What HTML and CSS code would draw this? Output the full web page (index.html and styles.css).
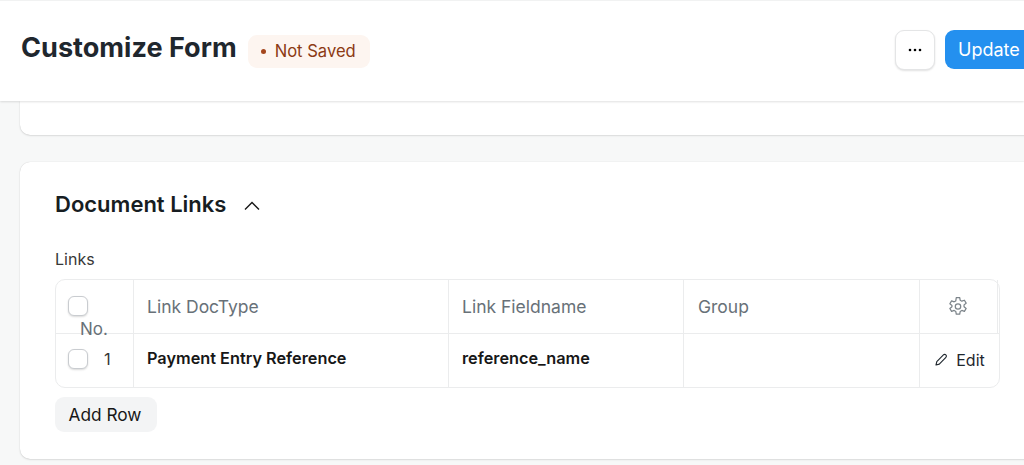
FILE: index.html
```html
<!DOCTYPE html>
<html lang="en">
<head>
<meta charset="utf-8">
<title>Customize Form</title>
<link rel="stylesheet" href="styles.css">
</head>
<body>
<header class="page-head">
  <div class="title-area">
    <h1 class="title">Customize Form</h1>
    <span class="badge"><i class="dot"></i>Not Saved</span>
  </div>
  <div class="actions">
    <button class="btn-more" aria-label="More">
      <svg width="14" height="4" viewBox="0 0 14 4"><circle cx="2" cy="2" r="1.3"/><circle cx="7" cy="2" r="1.3"/><circle cx="12" cy="2" r="1.3"/></svg>
    </button>
    <button class="btn-primary">Update</button>
  </div>
</header>
<main class="content">
  <section class="card card-stub"></section>
  <section class="card card-links">
    <div class="section-head">
      <h2 class="section-title">Document Links</h2>
      <svg class="chevron" width="16" height="10" viewBox="0 0 16 10"><path d="M1 8.5 8 1.5 15 8.5"/></svg>
    </div>
    <div class="field-label">Links</div>
    <div class="grid">
      <div class="row row-head">
        <div class="cell col-no">
          <span class="check"></span>
          <span class="no-label">No.</span>
        </div>
        <div class="cell col-a">Link DocType</div>
        <div class="cell col-b">Link Fieldname</div>
        <div class="cell col-c">Group</div>
        <div class="cell col-act">
          <svg class="gear" viewBox="2 1 14 15.4"><path d="M7.6 1.5h2.8l.4 2.2 1.3.7 2.1-.8 1.4 2.4-1.7 1.4v1.5l1.7 1.4-1.4 2.4-2.1-.8-1.3.8-.4 2.2H7.6l-.4-2.2-1.3-.8-2.1.8-1.4-2.4 1.7-1.4V7.9L2.4 6.5l1.4-2.4 2.1.8 1.3-.7z"/><circle cx="9" cy="8.7" r="2.2"/></svg>
        </div>
      </div>
      <div class="row row-body">
        <div class="cell col-no">
          <span class="check"></span>
          <span class="row-num">1</span>
        </div>
        <div class="cell col-a strong">Payment Entry Reference</div>
        <div class="cell col-b strong">reference_name</div>
        <div class="cell col-c"></div>
        <div class="cell col-act edit">
          <svg class="pencil" width="13" height="13" viewBox="0 0 13 13"><path d="M1 12l.8-3.4 6.6-6.7a1.7 1.7 0 0 1 2.5 2.4l-6.6 6.8z"/></svg>
          <span>Edit</span>
        </div>
      </div>
    </div>
    <button class="btn-add">Add Row</button>
  </section>
</main>
</body>
</html>
```
FILE: styles.css
```css
* { box-sizing: border-box; }
html, body { margin: 0; height: 465px; overflow: hidden; }
body {
  width: 1024px;
  background: #f7f8f8;
  font-family: Inter, "Liberation Sans", sans-serif;
  color: #171717;
}
.page-head {
  position: relative;
  z-index: 2;
  height: 101px;
  background: #fff;
  border-top: 1px solid #f1f2f2;
  box-shadow: 0 1px 2px rgba(0, 0, 0, .12);
  display: flex;
  justify-content: space-between;
  padding: 29px 0 0 21px;
  overflow: hidden;
}
.title-area { display: flex; align-items: flex-start; }
.title {
  margin: 0;
  font-size: 27.1px;
  font-weight: 700;
  line-height: 36px;
  color: #1f272e;
}
.badge {
  display: flex;
  align-items: center;
  height: 33px;
  margin: 5px 0 0 11px;
  padding: 0 14px 2px 13px;
  border-radius: 9px;
  background: #fdf5f0;
  color: #8c3a14;
  font-size: 16.6px;
}
.dot {
  width: 5px;
  height: 5px;
  margin: 2px 9px 0 0;
  border-radius: 50%;
  background: #a4461d;
}
.actions { display: flex; gap: 10px; flex: none; width: 129px; }
.btn-more {
  flex: none;
  width: 40px;
  height: 40px;
  padding: 0;
  background: #fff;
  border: 1px solid #e4e5e6;
  border-radius: 9px;
  box-shadow: 0 1px 2px rgba(0, 0, 0, .12);
  display: flex;
  align-items: center;
  justify-content: center;
}
.btn-primary {
  flex: none;
  width: 90px;
  height: 39px;
  padding: 0 0 0 13px;
  text-align: left;
  background: #2490ef;
  color: #fff;
  border: 0;
  border-radius: 9px;
  font: 18px Inter, "Liberation Sans", sans-serif;
}
.content { width: 1060px; padding-left: 20px; }
.card {
  background: #fff;
  border-radius: 10px;
  box-shadow: 0 0 1px rgba(0, 0, 0, .2), 0 1px 2px rgba(0, 0, 0, .1);
}
.card-stub { height: 34px; border-radius: 0 0 10px 10px; margin-bottom: 27px; }
.card-links { height: 297px; padding: 28px 0 0 35px; }
.section-head { display: flex; align-items: center; height: 28px; }
.section-title {
  margin: 0;
  font-size: 22px;
  font-weight: 600;
  color: #171d22;
}
.chevron { margin-left: 18px; margin-top: 3px; fill: none; stroke: #171717; stroke-width: 1.4; }
.field-label { margin-top: 31px; font-size: 16px; line-height: 20px; color: #383838; }
.grid {
  width: 945px;
  margin-top: 10px;
  border: 1px solid #ebeced;
  border-radius: 10px;
}
.row { display: flex; height: 54px; }
.row-head { height: 54px; border-bottom: 1px solid #ebeced; color: #687178; font-size: 17.5px; }
.row-body { height: 53px; font-size: 16px; }
.cell {
  display: flex;
  align-items: center;
  padding-left: 14px;
  border-right: 1px solid #ebeced;
  flex: none;
  position: relative;
}
.col-no { width: 78px; padding-left: 0; }
.col-a { width: 315px; padding-left: 13px; }
.col-b { width: 235px; padding-left: 13px; }
.col-c { width: 236px; }
.col-act { width: 78px; padding-left: 0; justify-content: center; }
.row-body .col-act { width: 80px; border-right: 0; }
.check {
  position: absolute;
  left: 12px;
  width: 20px;
  height: 20px;
  background: #fff;
  border: 1px solid #c9ccd0;
  border-radius: 6px;
  box-shadow: 0 1px 2px rgba(0, 0, 0, .15);
}
.row-head .check { top: 16px; }
.row-body .check { top: 15px; }
.no-label { position: absolute; left: 24px; top: 39px; line-height: 20px; font-size: 17px; }
.row-num { position: absolute; left: 48px; top: 15px; color: #383838; font-size: 16.5px; line-height: 20px; }
.strong { font-weight: 600; font-size: 16.3px; color: #171717; padding-bottom: 6px; }
.gear { width: 18px; height: 19px; fill: none; stroke: #7c848a; stroke-width: 1; stroke-linejoin: round; margin-right: 2px; }
.edit { gap: 8px; color: #1f272e; padding-bottom: 2px; }
.pencil { fill: none; stroke: #1f272e; stroke-width: 1.1; stroke-linejoin: round; }
.btn-add {
  display: block;
  margin-top: 9px;
  width: 102px;
  height: 35px;
  padding: 0 2px 0 0;
  background: #f3f4f5;
  border: 0;
  border-radius: 9px;
  color: #171717;
  font: 17.3px Inter, "Liberation Sans", sans-serif;
}
```
